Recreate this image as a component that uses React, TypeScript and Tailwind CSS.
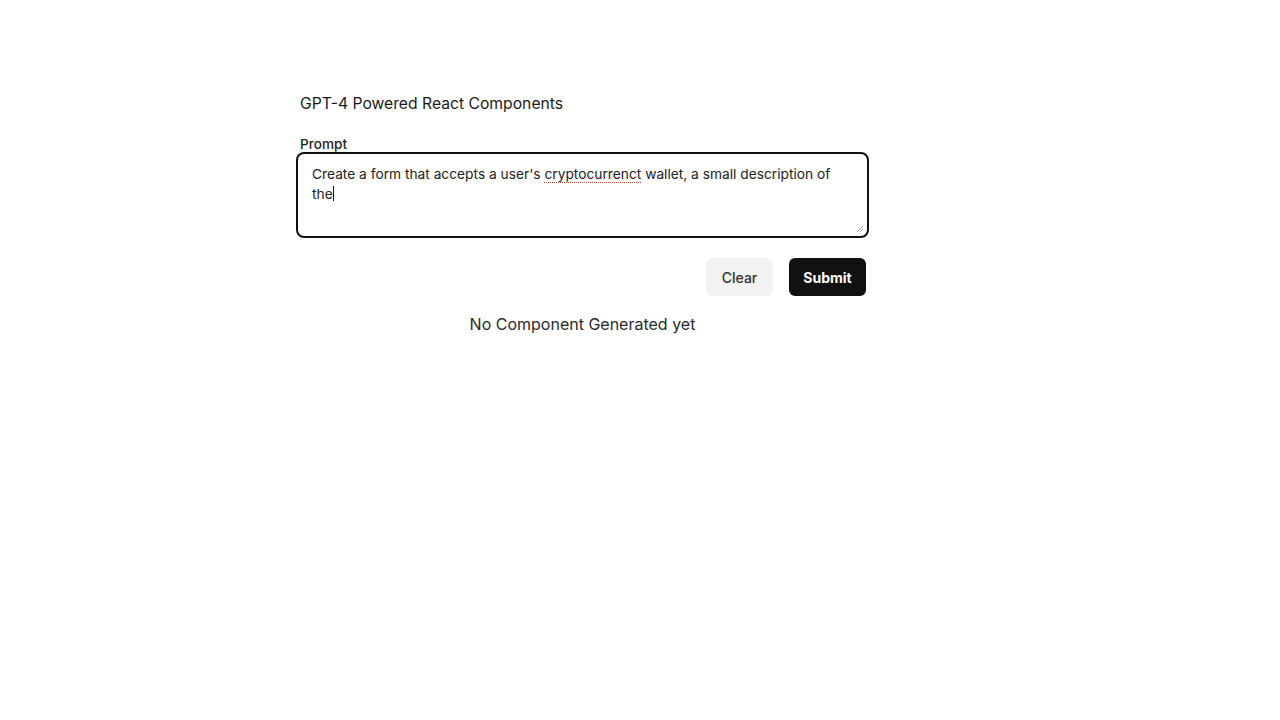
import React from "react";

export default function App() {
  return (
    <div className="min-h-[720px] w-full bg-white" style={{ fontFamily: "Inter, 'Liberation Sans', sans-serif" }}>
      <div className="ml-[296px] w-[573px] pt-[94px]">
        <h1 className="pl-[4px] text-[15.7px] leading-[20px] font-normal text-[#1a1a1a]">GPT-4 Powered React Components</h1>
        <div className="mt-[22px] pl-[4px] text-[13.6px] leading-[16px] font-medium text-[#222]">Prompt</div>
        <div className="relative h-[86px] w-[573px] rounded-[8px] border-2 border-[#111] bg-white pl-[14px] pr-[24px] pt-[10px] text-[13.75px] leading-[20px] text-[#222]">
          Create a form that accepts a user's{" "}
          <span className="border-b border-dotted border-[#d94848]">cryptocurrenct</span>{" "}
          wallet, a small description of the<span className="inline-block h-[15px] w-[1px] translate-y-[2px] bg-[#111]" />
          <svg className="absolute bottom-[3px] right-[3px]" width="8" height="8" viewBox="0 0 8 8">
            <path d="M7 1 L1 7 M7 4 L4 7" stroke="#999" strokeWidth="1" />
          </svg>
        </div>
        <div className="mt-[20px] flex justify-end gap-[16px] pr-[3px]">
          <button className="h-[38px] w-[67px] rounded-[6px] bg-[#f2f2f2] text-[14px] font-medium text-[#333]">Clear</button>
          <button className="h-[38px] w-[77px] rounded-[6px] bg-[#111] text-[14px] font-bold text-white">Submit</button>
        </div>
        <div className="mt-[18px] text-center text-[16px] leading-[20px] text-[#2a2a2a]">No Component Generated yet</div>
      </div>
    </div>
  );
}
